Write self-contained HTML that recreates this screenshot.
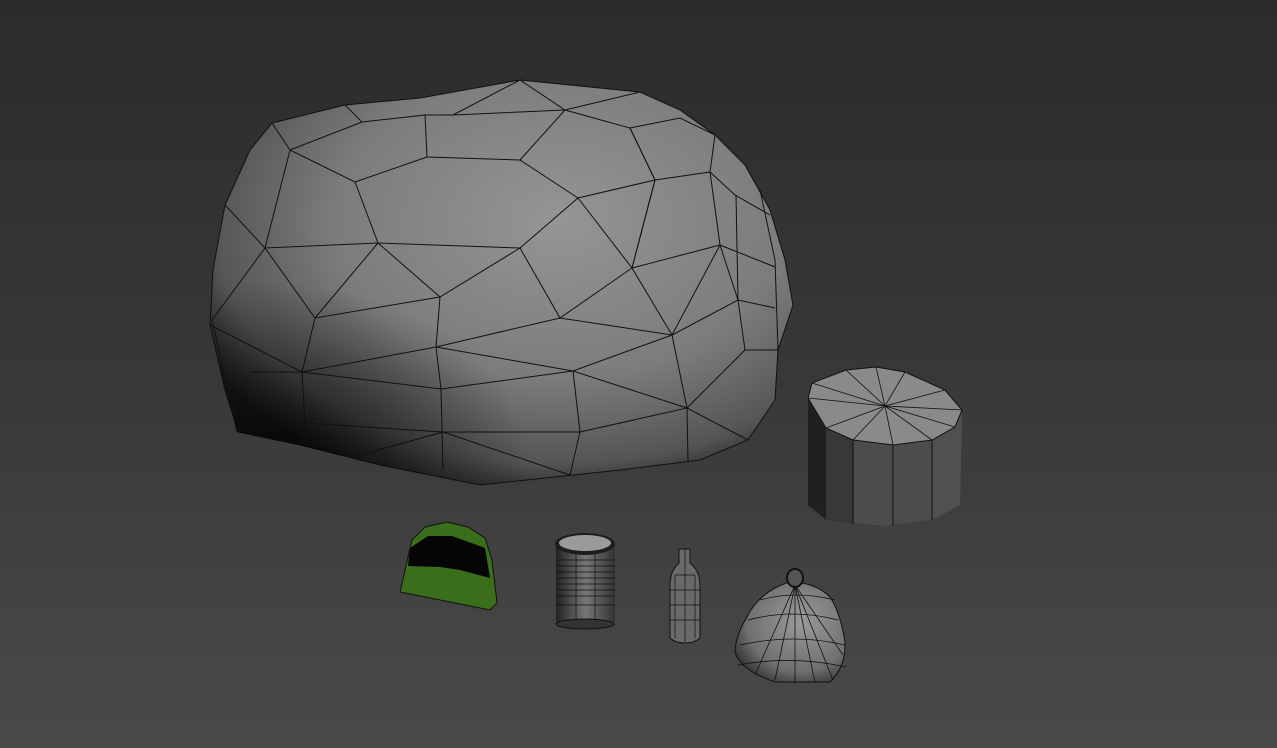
<!DOCTYPE html>
<html><head><meta charset="utf-8"><style>
html,body{margin:0;padding:0;width:1277px;height:748px;overflow:hidden;background:#3a3a3a}
svg{display:block}
</style></head><body>
<svg width="1277" height="748" viewBox="0 0 1277 748" xmlns="http://www.w3.org/2000/svg">
<defs>
<linearGradient id="bg" x1="0" y1="0" x2="0" y2="1">
<stop offset="0" stop-color="#2b2b2b"/><stop offset="0.5" stop-color="#383838"/><stop offset="1" stop-color="#4a4a4a"/>
</linearGradient>
<radialGradient id="rock" cx="0.6" cy="0.35" r="0.7">
<stop offset="0" stop-color="#959595"/><stop offset="0.55" stop-color="#7c7c7c"/><stop offset="0.85" stop-color="#555"/><stop offset="1" stop-color="#1e1e1e"/>
</radialGradient>
<linearGradient id="shade" x1="0" y1="0" x2="1" y2="1">
<stop offset="0.45" stop-color="#000" stop-opacity="0"/><stop offset="0.8" stop-color="#000" stop-opacity="0"/>
</linearGradient>
<radialGradient id="shade2" cx="0.1" cy="0.95" r="0.45">
<stop offset="0" stop-color="#000" stop-opacity="0.8"/><stop offset="1" stop-color="#000" stop-opacity="0"/>
</radialGradient>
<radialGradient id="bag" cx="0.6" cy="0.4" r="0.7">
<stop offset="0" stop-color="#9a9a9a"/><stop offset="0.7" stop-color="#707070"/><stop offset="1" stop-color="#303030"/>
</radialGradient>
<linearGradient id="can" x1="0" y1="0" x2="1" y2="0">
<stop offset="0" stop-color="#222"/><stop offset="0.5" stop-color="#777"/><stop offset="1" stop-color="#333"/>
</linearGradient>
</defs>
<rect width="1277" height="748" fill="url(#bg)"/>
<!-- rock -->
<polygon points="272,123 345,105 420,98 520,80 640,92 680,110 715,135 745,165 770,210 785,260 793,305 778,350 775,400 748,440 700,460 620,470 480,485 380,465 300,445 238,432 225,390 210,325 213,270 225,205 250,150" fill="url(#rock)" stroke="#111" stroke-width="1"/>
<polygon points="272,123 345,105 420,98 520,80 640,92 680,110 715,135 745,165 770,210 785,260 793,305 778,350 775,400 748,440 700,460 620,470 480,485 380,465 300,445 238,432 225,390 210,325 213,270 225,205 250,150" fill="url(#shade2)"/>
<g stroke="#111" stroke-width="1" fill="none">
<polyline points="272,123 290,150 355,182 378,243 520,248 578,198 655,180 710,172"/>
<polyline points="345,105 362,122 290,150"/>
<polyline points="362,122 425,115 453,115 565,110 640,92"/>
<polyline points="425,115 427,157 520,160 578,198"/>
<polyline points="453,115 520,80 565,110 630,128 655,180"/>
<polyline points="427,157 355,182"/>
<polyline points="520,160 565,110"/>
<polyline points="630,128 680,118 715,135 710,172 735,195 770,215"/>
<polyline points="630,128 655,180 632,268 560,318 520,248"/>
<polyline points="710,172 720,245 775,267"/>
<polyline points="290,150 265,248 378,243 440,297 520,248"/>
<polyline points="225,205 265,248 212,320 237,432"/>
<polyline points="265,248 315,318 440,297 436,347 560,318 672,335 720,245"/>
<polyline points="632,268 720,245"/>
<polyline points="655,180 632,268 672,335"/>
<polyline points="578,198 632,268"/>
<polyline points="315,318 302,372 436,347 573,371 672,335 738,300 775,308"/>
<polyline points="736,195 738,300 745,350 778,350"/>
<polyline points="720,245 738,300"/>
<polyline points="378,243 315,318"/>
<polyline points="210,325 302,372 441,389 573,371 687,408 745,350"/>
<polyline points="672,335 687,408"/>
<polyline points="436,347 441,389 443,470"/>
<polyline points="573,371 580,432 570,475"/>
<polyline points="250,372 302,372 305,423 443,432 580,432 687,408 748,440"/>
<polyline points="305,423 300,445"/>
<polyline points="687,408 688,462"/>
<polyline points="443,432 570,475"/>
<polyline points="360,455 443,432"/>
<polyline points="760,190 775,260 778,350"/>
</g>
<!-- cylinder -->
<polygon points="808,398 808,505 826,520 885,526 932,520 960,505 962,412 884,408" fill="#4c4c4c"/>
<polygon points="808,398 808,505 826,520 826,410" fill="#202020"/>
<polygon points="826,410 826,520 853,524 853,416" fill="#383838"/>
<polygon points="932,418 932,520 960,505 962,412" fill="#505050"/>
<g stroke="#111" stroke-width="1">
<line x1="853" y1="416" x2="853" y2="524"/><line x1="893" y1="420" x2="893" y2="526"/><line x1="932" y1="418" x2="932" y2="520"/>
</g>
<polygon points="808,398 812,383 846,370 876,367 905,372 945,390 962,410 955,427 932,440 893,445 853,440 826,428" fill="#8a8a8a" stroke="#111"/>
<g stroke="#111" stroke-width="0.8">
<line x1="885" y1="406" x2="808" y2="398"/><line x1="885" y1="406" x2="812" y2="383"/><line x1="885" y1="406" x2="846" y2="370"/><line x1="885" y1="406" x2="876" y2="367"/><line x1="885" y1="406" x2="905" y2="372"/><line x1="885" y1="406" x2="945" y2="390"/><line x1="885" y1="406" x2="962" y2="410"/><line x1="885" y1="406" x2="955" y2="427"/><line x1="885" y1="406" x2="932" y2="440"/><line x1="885" y1="406" x2="893" y2="445"/><line x1="885" y1="406" x2="853" y2="440"/><line x1="885" y1="406" x2="826" y2="428"/>
</g>
<!-- green bag -->
<polygon points="400,592 412,540 425,527 447,522 468,527 485,538 492,560 497,603 490,610" fill="#3a6e1a" stroke="#111"/>
<polygon points="410,548 428,536 452,536 485,548 490,578 460,570 440,567 408,566" fill="#050505"/>
<!-- can -->
<rect x="556" y="542" width="59" height="80" fill="url(#can)"/>
<g stroke="#111" stroke-width="0.7">
<line x1="556" y1="560" x2="615" y2="560"/><line x1="556" y1="566" x2="615" y2="566"/><line x1="556" y1="572" x2="615" y2="572"/><line x1="556" y1="578" x2="615" y2="578"/><line x1="556" y1="584" x2="615" y2="584"/><line x1="556" y1="590" x2="615" y2="590"/><line x1="556" y1="596" x2="615" y2="596"/><line x1="556" y1="605" x2="615" y2="605"/>
<line x1="576" y1="545" x2="576" y2="625"/><line x1="595" y1="545" x2="595" y2="625"/>
</g>
<ellipse cx="585" cy="624" rx="29" ry="5" fill="#333" stroke="#111"/>
<ellipse cx="585" cy="544" rx="30" ry="11" fill="#1d1d1d"/>
<ellipse cx="585" cy="543" rx="26" ry="8" fill="#9a9a9a"/>
<!-- bottle -->
<path d="M679,549 h11 v14 q10,8 10,22 v53 q-5,5 -15,5 q-10,0 -15,-5 v-53 q0,-14 9,-22 z" fill="#6a6a6a" stroke="#111"/>
<g stroke="#111" stroke-width="0.7">
<line x1="685" y1="549" x2="685" y2="642"/><line x1="675" y1="575" x2="675" y2="638"/><line x1="695" y1="575" x2="695" y2="638"/>
<line x1="670" y1="590" x2="700" y2="590"/><line x1="670" y1="605" x2="700" y2="605"/><line x1="670" y1="620" x2="700" y2="620"/><line x1="675" y1="575" x2="695" y2="575"/>
</g>
<!-- sack -->
<path d="M789,582 q-30,10 -42,35 q-12,20 -12,35 q5,18 40,30 h55 q16,-15 15,-40 q-5,-30 -15,-45 q-15,-15 -41,-15 z" fill="url(#bag)" stroke="#111"/>
<g stroke="#111" stroke-width="0.8" fill="none">
<path d="M760,600 q35,-10 75,0"/><path d="M748,620 q45,-12 90,0"/><path d="M740,645 q55,-12 105,0"/><path d="M738,665 q55,-10 108,2"/>
<path d="M795,585 l-40,90"/><path d="M795,585 l-20,95"/><path d="M795,585 l0,98"/><path d="M795,585 l20,98"/><path d="M795,585 l38,95"/><path d="M795,585 l48,70"/>
</g>
<ellipse cx="795" cy="578" rx="8" ry="9" fill="#555" stroke="#111" stroke-width="2"/>
</svg>
</body></html>
